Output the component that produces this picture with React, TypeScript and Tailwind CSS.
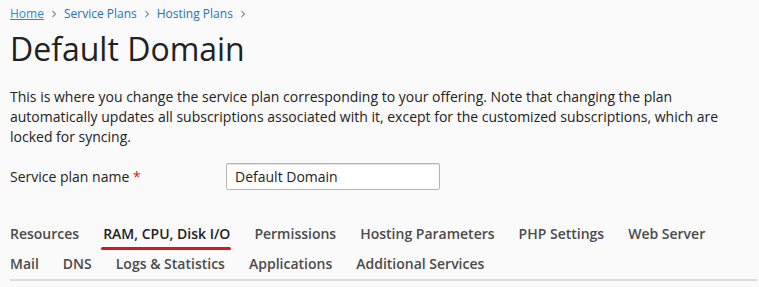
import React from "react";

const rowOne = [
  "Resources",
  "RAM, CPU, Disk I/O",
  "Permissions",
  "Hosting Parameters",
  "PHP Settings",
  "Web Server",
];

const rowTwo = ["Mail", "DNS", "Logs & Statistics", "Applications", "Additional Services"];

function Chevron() {
  return (
    <svg width="8" height="8" viewBox="0 0 8 8" className="mx-[6px] text-[#8a8a8a]">
      <path d="M2.5 1 L5.5 4 L2.5 7" fill="none" stroke="currentColor" strokeWidth="1.1" />
    </svg>
  );
}

function Tab({ label, active }: { label: string; active?: boolean }) {
  return (
    <li className="relative mr-[24px] h-[30px] leading-[30px]">
      <span className={active ? "text-[#222]" : "text-[#4b4b4b]"}>{label}</span>
      {active && (
        <span className="absolute -left-[2px] -right-[1px] bottom-[-1px] h-[3px] rounded-full bg-[#d3191c]" />
      )}
    </li>
  );
}

export default function App() {
  return (
    <div
      className="h-[287px] w-[759px] overflow-hidden bg-[#fafafa] px-[10px] text-[#222]"
      style={{ fontFamily: '"Open Sans", "Noto Sans", sans-serif' }}
    >
      {/* breadcrumbs */}
      <nav className="flex items-center pt-[5px] text-[12px] leading-[18px]">
        <a className="text-[#2b8ccf] underline decoration-[#2b8ccf]">Home</a>
        <Chevron />
        <a className="text-[#1f72b8]">Service Plans</a>
        <Chevron />
        <a className="text-[#1f72b8]">Hosting Plans</a>
        <Chevron />
      </nav>

      <h1 className="mt-[6px] text-[32px] leading-[40px] font-normal text-[#222]">Default Domain</h1>

      <p className="mt-[18px] text-[14px] leading-[20px] text-[#222]">
        This is where you change the service plan corresponding to your offering. Note that changing the plan
        automatically updates all subscriptions associated with it, except for the customized subscriptions, which are
        locked for syncing.
      </p>

      <div className="mt-[16px] flex items-center text-[14px]">
        <label className="w-[216px] text-[#222]">
          Service plan name <span className="text-[#d3191c]">*</span>
        </label>
        <input
          readOnly
          value="Default Domain"
          className="h-[27px] w-[214px] rounded-[2px] border border-[#b5b5b5] bg-white px-[8px] text-[14px] text-[#222] shadow-[inset_0_1px_0_#e6e6e6] outline-none"
        />
      </div>

      {/* tabs */}
      <div className="-mr-[8px] mt-[29px] border-b-[2px] border-[#dcdcdc] text-[14px] font-semibold">
        <ul className="flex">
          {rowOne.map((t) => (
            <Tab key={t} label={t} active={t === "RAM, CPU, Disk I/O"} />
          ))}
        </ul>
        <ul className="flex">
          {rowTwo.map((t) => (
            <Tab key={t} label={t} />
          ))}
        </ul>
      </div>
    </div>
  );
}
